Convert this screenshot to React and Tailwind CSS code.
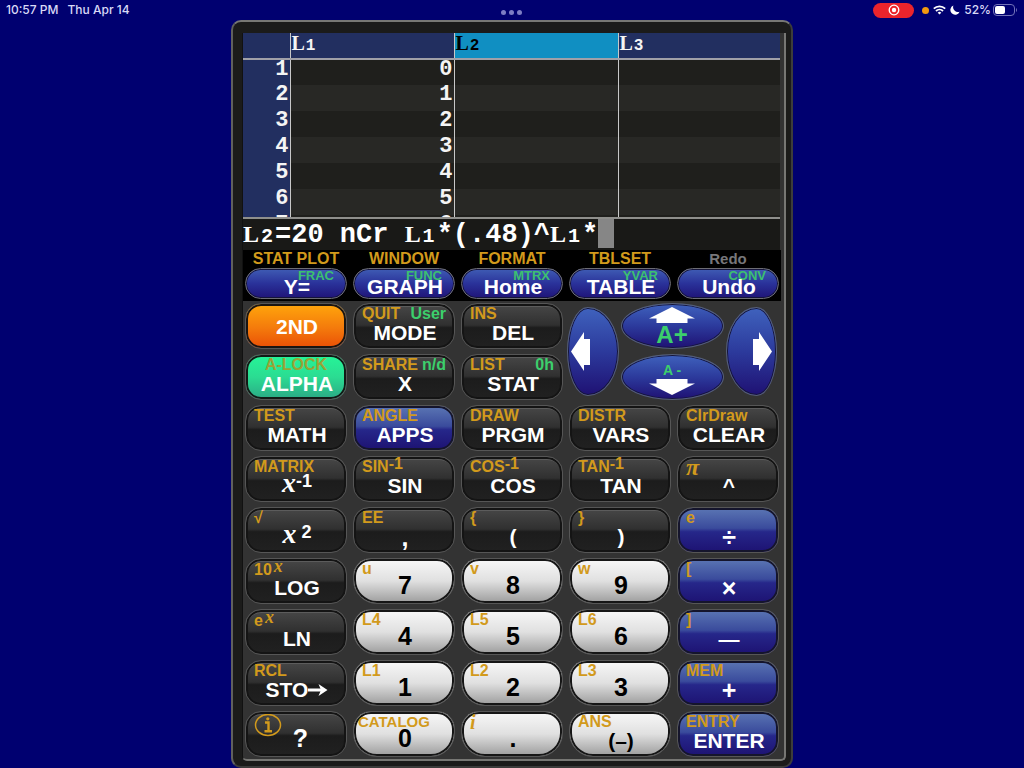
import React from 'react';

const columns = [
  { n: 1, width: 'w-[164px]', selected: false },
  { n: 2, width: 'w-[164px]', selected: true },
  { n: 3, width: '', selected: false },
];

const rows = [1, 2, 3, 4, 5, 6, 7];

const functionKeys = [
  { top: 'STAT PLOT', alt: 'FRAC', label: 'Y=' },
  { top: 'WINDOW', alt: 'FUNC', label: 'GRAPH' },
  { top: 'FORMAT', alt: 'MTRX', label: 'Home' },
  { top: 'TBLSET', alt: 'YVAR', label: 'TABLE' },
  { top: 'Redo', alt: 'CONV', label: 'Undo', muted: true },
];

const faces = {
  dark: 'rounded-[16px] text-white bg-[linear-gradient(#484848,#303030_48%,#1c1c1c_54%,#212121)] shadow-[inset_0_0_0_2px_#141414,inset_0_3px_0_#5c5c5c]',
  blue: 'rounded-[16px] text-white bg-[linear-gradient(#5b76b4,#3a4b9c_46%,#26278a_54%,#1d1272)] shadow-[inset_0_0_0_2px_#15152c]',
  light: 'rounded-t-[18px] rounded-b-[24px] text-black bg-[linear-gradient(#f8f8f8,#e0e0e0_50%,#9c9c9c)] shadow-[inset_0_0_0_2px_#161616]',
  orange: 'rounded-[16px] text-white bg-[linear-gradient(#ffa60c,#f47a0c_55%,#ea4f06)] shadow-[inset_0_0_0_2px_#1a1512]',
  green: 'rounded-[16px] text-white bg-[linear-gradient(#25f598,#2bdc92_50%,#2ba985)] shadow-[inset_0_0_0_2px_#121a16]',
};

// list names use a serif L and a small digit, each one cell wide
const ListName = ({ n }) => (
  <span className="inline-flex items-baseline">
    <span className="w-4 font-['Liberation_Serif'] text-[24px]">L</span>
    <span className="w-4 text-center text-[20px]">{n}</span>
  </span>
);

const X = () => <i className="relative -top-[3px] font-['Liberation_Serif'] text-[28px] font-bold">x</i>;
const SmallX = () => <i className="relative -top-[3px] ml-[2px] font-['Liberation_Serif'] text-[18px]">x</i>;
const Inverse = () => <span className="relative -top-[3px]">-1</span>;

const InfoIcon = () => (
  <svg width="28" height="24" viewBox="0 0 28 24" fill="none" stroke="#d29a1c" className="shrink-0">
    <ellipse cx="14" cy="11" rx="12.5" ry="10.5" strokeWidth="1.5" />
    <path d="M11 8.5h3.5V17M10.5 17.3h7.5" strokeWidth="2.4" />
    <circle cx="13.8" cy="4.8" r="1.6" fill="#d29a1c" stroke="none" />
  </svg>
);

const StoreLabel = () => (
  <span className="flex items-center">
    STO
    <svg width="20" height="14" viewBox="0 0 20 14" fill="none" stroke="currentColor" strokeWidth="3">
      <path d="M0 7h15" />
      <path d="M10.500 1L19.500 7l-9 6 2.500-6z" fill="currentColor" stroke="none" />
    </svg>
  </span>
);

const topKeys = [
  { label: '2ND', face: 'orange', single: true },
  { top: 'QUIT', alt: 'User', label: 'MODE' },
  { top: 'INS', label: 'DEL' },
];

const secondKeys = [
  { top: 'A-LOCK', label: 'ALPHA', face: 'green', centered: true },
  { top: 'SHARE', alt: 'n/d', label: 'X' },
  { top: 'LIST', alt: '0h', label: 'STAT' },
];

const keys = [
  { top: 'TEST', label: 'MATH' },
  { top: 'ANGLE', label: 'APPS', face: 'blue' },
  { top: 'DRAW', label: 'PRGM' },
  { top: 'DISTR', label: 'VARS' },
  { top: 'ClrDraw', label: 'CLEAR' },

  { top: 'MATRIX', label: <><X /><span className="relative -top-[5px] text-[18px]">-1</span></>, name: 'x to the -1' },
  { top: <>SIN<Inverse /></>, label: 'SIN' },
  { top: <>COS<Inverse /></>, label: 'COS' },
  { top: <>TAN<Inverse /></>, label: 'TAN' },
  { top: <i className="font-['Liberation_Serif'] text-[24px]">π</i>, label: '^' },

  { top: '√', label: <><X /><span className="relative -top-[5px] text-[18px]"> 2</span></>, name: 'x squared' },
  { top: 'EE', label: ',', size: 'big' },
  { top: '{', label: '(' },
  { top: '}', label: ')' },
  { top: 'e', label: '÷', face: 'blue', size: 'big' },

  { top: <>10<SmallX /></>, label: 'LOG' },
  { top: 'u', label: '7', face: 'light', size: 'digit' },
  { top: 'v', label: '8', face: 'light', size: 'digit' },
  { top: 'w', label: '9', face: 'light', size: 'digit' },
  { top: '[', label: '×', face: 'blue', size: 'big' },

  { top: <>e<SmallX /></>, label: 'LN' },
  { top: 'L4', label: '4', face: 'light', size: 'digit' },
  { top: 'L5', label: '5', face: 'light', size: 'digit' },
  { top: 'L6', label: '6', face: 'light', size: 'digit' },
  { top: ']', label: '—', face: 'blue' },

  { top: 'RCL', label: <StoreLabel />, name: 'STO' },
  { top: 'L1', label: '1', face: 'light', size: 'digit' },
  { top: 'L2', label: '2', face: 'light', size: 'digit' },
  { top: 'L3', label: '3', face: 'light', size: 'digit' },
  { top: 'MEM', label: '+', face: 'blue', size: 'big' },

  { top: <InfoIcon />, label: ' ?', name: 'Help', size: 'digit' },
  { top: 'CATALOG', label: '0', face: 'light', size: 'digit', wide: true },
  { top: <i className="font-['Liberation_Serif'] text-[20px]">i</i>, label: '.', face: 'light', size: 'digit' },
  { top: 'ANS', label: '(–)', face: 'light' },
  { top: 'ENTRY', label: 'ENTER', face: 'blue' },
];

const sizes = {
  text: 'text-[21px]',
  big: 'text-[25px]',
  digit: '-mt-[3px] text-[25px]',
};

const Key = ({ top, alt, label, face = 'dark', size = 'text', single, centered, wide, name }) => (
  <button
    type="button"
    aria-label={name}
    className={`flex h-[46px] flex-col border border-[#565656] pt-[2px] font-bold whitespace-nowrap ${single ? 'justify-center' : ''} ${faces[face]}`}
  >
    {!single && (
      <span
        className={`flex h-4 w-full leading-4 ${wide ? 'px-1 text-[15px]' : 'px-2 text-[16px]'} ${centered ? 'justify-center text-[#9aa335]' : 'justify-between text-[#d29a1c]'}`}
      >
        <span>{top}</span>
        {alt && <span className="text-[#3ccf6c]">{alt}</span>}
      </span>
    )}
    <span className={`flex h-[22px] w-full items-center justify-center pl-[2px] leading-[22px] whitespace-pre ${sizes[size]}`}>
      {label}
    </span>
  </button>
);

const padFace = 'border border-[#565f78] bg-[linear-gradient(#3f62bd,#2c3a9c_50%,#1f1173)] shadow-[inset_0_0_0_1px_#15153a]';

const ArrowPad = () => (
  <div className="col-span-2 col-start-4 row-span-2 row-start-1 -ml-[2px] mr-[2px] grid grid-cols-[1fr_2fr_1fr] gap-[2px]">
    <button type="button" aria-label="Left" className={`my-[4px] flex items-center rounded-l-[40%_50%] rounded-r-[60%_50%] pl-[3px] ${padFace}`}>
      <svg width="19" height="39" viewBox="0 0 19 39" fill="#fff">
        <path d="M0 19.5L13 0v7h6v26h-6v6z" />
      </svg>
    </button>
    <div className="flex flex-col gap-[5px]">
      <button type="button" className={`flex h-[46px] flex-col items-center rounded-[50%] pt-[3px] ${padFace}`}>
        <svg width="46" height="16" viewBox="0 0 46 16" fill="#fff" className="shrink-0">
          <path d="M23 0l23 11.500h-7.500V16h-31v-4.500H0z" />
        </svg>
        <span className="text-[24px] leading-[24px] font-bold text-[#3ccf6c]">A+</span>
      </button>
      <button type="button" className={`flex h-[46px] flex-col items-center justify-end rounded-[50%] pb-[4px] ${padFace}`}>
        <span className="text-[14px] leading-[18px] font-bold text-[#3ccf6c]">A -</span>
        <svg width="46" height="16" viewBox="0 0 46 16" fill="#fff" className="shrink-0">
          <path d="M23 16L0 4.500h7.500V0h31v4.500H46z" />
        </svg>
      </button>
    </div>
    <button type="button" aria-label="Right" className={`my-[4px] flex items-center justify-end rounded-l-[60%_50%] rounded-r-[40%_50%] pr-[4px] ${padFace}`}>
      <svg width="19" height="39" viewBox="0 0 19 39" fill="#fff">
        <path d="M19 19.500L6 0v7H0v26h6v6z" />
      </svg>
    </button>
  </div>
);

const StatusBar = () => (
  <header className="grid h-5 grid-cols-3 items-center px-[6px] font-['Inter'] text-[12px] leading-5 font-medium text-[#d9d9f6]">
    <div className="flex gap-[9px]">
      <span>10:57 PM</span>
      <span>Thu Apr 14</span>
    </div>
    <div className="flex justify-center gap-[3px] pt-[4px]">
      <span className="size-[5px] rounded-full bg-[#7d7dc4]" />
      <span className="size-[5px] rounded-full bg-[#7d7dc4]" />
      <span className="size-[5px] rounded-full bg-[#7d7dc4]" />
    </div>
    <div className="flex items-center justify-end">
      <span className="mr-2 flex h-[15px] w-[41px] items-center justify-center rounded-full bg-[#ea242c]">
        <svg width="12" height="12" viewBox="0 0 12 12" fill="none" stroke="#fff">
          <circle cx="6" cy="6" r="4.800" strokeWidth="1.300" />
          <circle cx="6" cy="6" r="2.200" fill="#fff" stroke="none" />
        </svg>
      </span>
      <span className="mr-1 size-[7px] rounded-full bg-[#f29a10]" />
      <svg width="13" height="10" viewBox="0 0 13 10" fill="none" stroke="#fff" strokeWidth="1.800" className="mr-1">
        <path d="M.8 3.600a8.200 8.200 0 0 1 11.400 0M3 6a5 5 0 0 1 7 0" />
        <path d="M6.500 9.600L4.700 7.700a2.600 2.600 0 0 1 3.600 0z" fill="#fff" stroke="none" />
      </svg>
      <svg width="10" height="10" viewBox="0 0 10 10" fill="#fff" className="mr-1">
        <path d="M3.400.5A4.800 4.800 0 1 0 9.600 6.800 4.900 4.900 0 0 1 3.400.5z" />
      </svg>
      <span>52%</span>
      <svg width="25" height="12" viewBox="0 0 25 12" fill="none" className="ml-[2px]">
        <rect x=".5" y=".5" width="21" height="11" rx="3.500" stroke="#7272b8" />
        <rect x="2" y="2" width="10" height="8" rx="2" fill="#fff" />
        <path d="M23 4v4c1.300-.6 1.300-3.400 0-4z" fill="#7272b8" />
      </svg>
    </div>
  </header>
);

const ListTable = () => (
  <div className="h-[186px] overflow-hidden border-b-2 border-[#8f8f8c]">
    <table className="w-full table-fixed border-collapse font-['Liberation_Mono'] text-[22px] font-bold text-[#f4f4f4]">
      <thead>
        <tr className="h-[26px] border-b-2 border-[#a0a0a8] text-left">
          <th className="w-[47px] bg-[#222f60]" />
          {columns.map(col => (
            <th
              key={col.n}
              className={`border-l border-[#c8c8c8] p-0 align-top leading-[20px] ${col.width} ${col.selected ? 'bg-[#108fc2] text-black' : 'bg-[#222f60]'}`}
            >
              <span className="flex items-baseline pl-px">
                <span className="w-[13px] font-['Liberation_Serif'] text-[20px]">L</span>
                <span className="w-[12px] text-center text-[16px]">{col.n}</span>
              </span>
            </th>
          ))}
        </tr>
      </thead>
      <tbody>
        {rows.map(n => (
          <tr key={n} className="h-[26px] bg-[#282825] odd:bg-[#1f1f1c]">
            <td className="bg-[#222f60] p-0 pr-px text-right align-top leading-[20px]">{n}</td>
            <td className="border-l border-[#c8c8c8] p-0 pr-px text-right align-top leading-[20px]">{n - 1}</td>
            <td className="border-l border-[#c8c8c8] p-0" />
            <td className="border-l border-[#c8c8c8] p-0" />
          </tr>
        ))}
      </tbody>
    </table>
  </div>
);

export default function App() {
  return (
    <div className="min-h-screen bg-[#000070] font-['Liberation_Sans',sans-serif]">
      <StatusBar />
      <main className="mx-auto max-w-[562px] rounded-[10px] border-2 border-[#3c3c3b] border-t-[#777774] border-l-[#60605e] bg-[#1b1b1a] pt-[11px] pr-[5px] pb-[5px] pl-[9px]">
        <div className="rounded-b-[5px] border-r-2 border-b-2 border-l border-[#777774] border-l-[#111] bg-[#333]">
          <section className="mr-1 bg-[#191917]">
            <ListTable />
            <div className="flex h-[31px] items-baseline font-['Liberation_Mono'] text-[27px] leading-[30px] font-bold whitespace-pre text-white">
              <ListName n={2} />
              <span>=20 nCr </span>
              <ListName n={1} />
              <span>*(.48)^</span>
              <ListName n={1} />
              <span>*</span>
              <span className="h-[29px] w-4 self-start bg-[#868686]" />
            </div>
          </section>

          <section className="mr-[3px] grid grid-cols-5 gap-[6px] bg-black pr-[2px] pb-[2px] pl-[2px]">
            {functionKeys.map(key => (
              <div key={key.label} className="flex flex-col text-center font-bold whitespace-nowrap">
                <span className={key.muted ? 'text-[15px] leading-[18px] text-[#77777a]' : 'text-[16px] leading-[18px] text-[#d29a1c]'}>
                  {key.top}
                </span>
                <button
                  type="button"
                  className="flex h-[31px] flex-col rounded-full border border-[#6c6c74] bg-[linear-gradient(#3f5cb4,#2a329a_50%,#1f1478)] text-white shadow-[inset_0_0_0_1px_#15153a]"
                >
                  <span className="h-[8px] w-full pr-[12px] text-right text-[13px] leading-[13px] text-[#3cc070]">{key.alt}</span>
                  <span className="relative w-full pl-[2px] text-[21px] leading-[20px]">{key.label}</span>
                </button>
              </div>
            ))}
          </section>

          <section className="grid grid-cols-5 gap-x-[6px] gap-y-[5px] pt-[2px] pr-[5px] pb-[2px] pl-[2px]">
            {topKeys.map(key => <Key key={key.label} {...key} />)}
            <ArrowPad />
            {secondKeys.map(key => <Key key={key.label} {...key} />)}
            {keys.map((key, i) => <Key key={i} {...key} />)}
          </section>
        </div>
      </main>
    </div>
  );
}
